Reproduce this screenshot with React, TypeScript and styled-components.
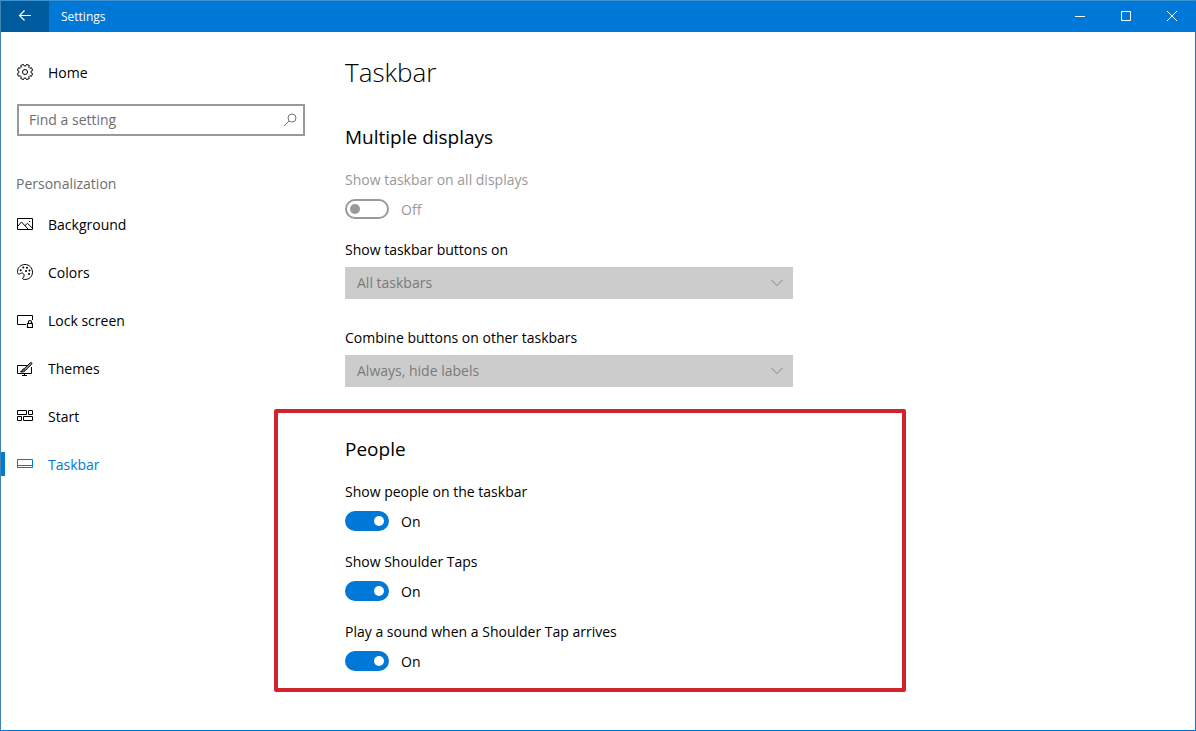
import React, { useState } from "react";
import styled, { createGlobalStyle, css } from "styled-components";

const accent = "#0078d7";

const GlobalStyle = createGlobalStyle`
  *, *::before, *::after { box-sizing: border-box; }
  body {
    margin: 0;
    background: #fff;
    color: #000;
    font: 14px/20px "Segoe UI", "Open Sans", "Noto Sans", sans-serif;
  }
  button, input, select { font: inherit; color: inherit; }
`;

const Window = styled.div`
  display: flex;
  flex-direction: column;
  min-height: 100vh;
  border: 1px solid ${accent};
  border-top-color: #3c93cf;
  border-left-color: #3f86b5;
  background: #fff;
`;

const TitleBar = styled.header`
  display: flex;
  height: 31px;
  background: ${accent};
  color: #fff;
`;

const TitleButton = styled.button<{ $back?: boolean }>`
  display: flex;
  align-items: center;
  justify-content: center;
  width: ${(p) => (p.$back ? 48 : 46)}px;
  padding: 0 0 1px;
  border: 0;
  background: ${(p) => (p.$back ? "#005a9e" : "transparent")};
  color: #fff;
`;

const WindowTitle = styled.span`
  flex: 1;
  padding-left: 12px;
  font-size: 12px;
  line-height: 32px;
`;

const Body = styled.div`
  display: flex;
  flex: 1;
`;

const Sidebar = styled.aside`
  flex: 0 0 304px;
  padding-top: 16px;
`;

const NavLink = styled.a<{ $active?: boolean }>`
  position: relative;
  display: flex;
  align-items: center;
  gap: 15px;
  height: 48px;
  padding-left: 16px;
  color: ${(p) => (p.$active ? accent : "#000")};
  text-decoration: none;
  ${(p) =>
    p.$active &&
    css`
      &::before {
        content: "";
        position: absolute;
        left: 0;
        width: 4px;
        height: 24px;
        background: ${accent};
      }
    `}
`;

const NavText = styled.span`
  padding-top: 2px;
`;

const SearchBox = styled.label`
  display: flex;
  align-items: center;
  height: 32px;
  margin: 8px 0 38px 16px;
  padding: 0 5px 0 10px;
  border: 2px solid #999;
  color: #777;
`;

const SearchInput = styled.input`
  flex: 1;
  min-width: 0;
  padding: 0;
  border: 0;
  outline: 0;
  background: transparent;
  &::placeholder { color: #6e6e6e; opacity: 1; }
`;

const GroupName = styled.div`
  padding: 0 0 6px 15px;
  color: #6e6e6e;
`;

const Main = styled.main`
  flex: 1;
  min-width: 0;
  padding: 24px 40px 38px;
`;

const PageTitle = styled.h1`
  margin: 0 0 35px;
  font-size: 26px;
  line-height: 32px;
  font-weight: 300;
`;

const Section = styled.section<{ $marked?: boolean }>`
  max-width: 448px;
  & + & { margin-top: 48px; }
  ${(p) =>
    p.$marked &&
    css`
      position: relative;
      &::after {
        content: "";
        position: absolute;
        inset: -26px -113px -21px -71px;
        border: 4px solid #d2232a;
        border-radius: 2px;
        pointer-events: none;
      }
    `}
`;

const SectionTitle = styled.h2`
  margin: 0 0 19px;
  font-size: 19px;
  line-height: 28px;
  font-weight: 400;
`;

const ToggleSetting = styled.div<{ $disabled?: boolean }>`
  color: ${(p) => (p.$disabled ? "#999" : "#000")};
  & + & { margin-top: 21px; }
`;

const SelectSetting = styled.div`
  margin-top: 21px;
  & + & { margin-top: 29px; }
`;

const SettingLabel = styled.label`
  display: block;
`;

const ToggleRow = styled.div`
  display: flex;
  align-items: center;
  gap: 12px;
  height: 20px;
  margin-top: 9px;
`;

const ToggleState = styled.span`
  padding-top: 2px;
`;

const ToggleInput = styled.input`
  appearance: none;
  display: flex;
  align-items: center;
  width: 44px;
  height: 20px;
  margin: 0;
  padding: 0 3px;
  border: 2px solid #333;
  border-radius: 10px;
  &::before {
    content: "";
    width: 10px;
    height: 10px;
    border-radius: 5px;
    background: #333;
  }
  &:checked {
    justify-content: flex-end;
    border-color: ${accent};
    background: ${accent};
  }
  &:checked::before { background: #fff; }
  &:disabled { border-color: #999; }
  &:disabled::before { background: #999; }
`;

const SelectFrame = styled.div`
  display: grid;
  align-items: center;
  margin-top: 7px;
  & > * { grid-area: 1 / 1; }
  & > svg { justify-self: end; margin-right: 10px; pointer-events: none; }
`;

const Select = styled.select`
  appearance: none;
  width: 100%;
  height: 32px;
  padding: 0 32px 0 12px;
  border: 0;
  border-radius: 0;
  background: #ccc;
  &:disabled { color: #7a7a7a; opacity: 1; }
`;

type IconProps = { children: React.ReactNode; size?: number };

const Icon = ({ children, size = 16 }: IconProps) => (
  <svg
    width={size}
    height={size}
    viewBox={`0 0 ${size} ${size}`}
    fill="none"
    stroke="currentColor"
    strokeWidth="1"
    aria-hidden="true"
  >
    {children}
  </svg>
);

const gearPath = (() => {
  const points: string[] = [];
  const at = (radius: number, degrees: number) => {
    const a = (degrees * Math.PI) / 180;
    return `${(8 + radius * Math.sin(a)).toFixed(2)} ${(8 - radius * Math.cos(a)).toFixed(2)}`;
  };
  for (let i = 0; i < 8; i++) {
    const c = i * 45 + 22.5;
    points.push(at(6.1, c - 15), at(7.8, c - 11), at(7.8, c + 11), at(6.1, c + 15));
  }
  return `M${points.join("L")}Z`;
})();

const icons = {
  home: (
    <Icon>
      <path d={gearPath} strokeLinejoin="round" />
      <circle cx="8" cy="8" r="2.5" />
    </Icon>
  ),
  background: (
    <Icon>
      <path d="M.5 2.5h15v11H.5z" />
      <path d="M.5 10.5 4.500 6l6.500 7M8 9.700l2.500-2.400 5 5" />
      <path d="M12 5.500h1.200" />
    </Icon>
  ),
  colors: (
    <Icon>
      <path d="M6.2 15.2c1.6.5 4 .3 5.9-.8 2.1-1.2 3.400-3.600 3.400-6.200C15.500 3.800 12.200.5 8 .5S.5 3.600.5 7.500c0 1.500.5 2.700 1.500 2.700 1.300 0 1.700-1.500 3.200-1.200 1.300.3 2.200 1.500 1.900 3-.2 1.200-1.300 1.500-1.500 2.300-.1.400.2.700.6.900Z" />
      <g fill="currentColor" stroke="none">
        <circle cx="3.7" cy="6.2" r="1" />
        <circle cx="6.3" cy="3.6" r="1" />
        <circle cx="10" cy="3.7" r="1" />
        <circle cx="12.5" cy="6.5" r="1" />
        <circle cx="12" cy="10" r="1" />
        <circle cx="9" cy="7" r="1" />
      </g>
    </Icon>
  ),
  lock: (
    <Icon>
      <path d="M9 12.5H.5v-9h15V8" />
      <path d="M10.5 11.5h5v4h-5z" strokeWidth="1.2" />
      <path d="M11.5 11.500v-1.500a1.500 1.500 0 0 1 3 0v1.500" strokeWidth="1.2" />
    </Icon>
  ),
  themes: (
    <Icon>
      <path d="M10 5.5H.5v8h14V7M5 15.5h5M7.500 13.500v2" />
      <path
        d="M3.500 11.700c1.500 0 1.500-2.900 3.400-2.900 1 0 1.600.8 1.400 1.700-.3 1.200-2.600 1.900-4.800 1.200Z"
        fill="#777"
      />
      <path d="m7.300 8.500 6-5.700c.5-.4 1.100-.4 1.400 0 .4.400.3.900-.1 1.400L8.800 10" fill="#999" />
    </Icon>
  ),
  start: (
    <Icon>
      <path d="M.5 2.5h9v4h-9zM11.5 2.5h4v4h-4zM.5 8.5h4v4h-4zM6.5 8.5h9v4h-9z" />
    </Icon>
  ),
  taskbar: (
    <Icon>
      <path d="M.5 3.5h15v8H.5zM.5 9.5h15" />
    </Icon>
  ),
};

const Chevron = () => (
  <svg width="12" height="8" viewBox="0 0 12 8" fill="none" stroke="#858585" aria-hidden="true">
    <path d="m.5 1 5.500 5.500L11.500 1" />
  </svg>
);

const navItems: { name: string; icon: keyof typeof icons }[] = [
  { name: "Background", icon: "background" },
  { name: "Colors", icon: "colors" },
  { name: "Lock screen", icon: "lock" },
  { name: "Themes", icon: "themes" },
  { name: "Start", icon: "start" },
  { name: "Taskbar", icon: "taskbar" },
];

type ToggleProps = { id: string; label: string; initial?: boolean; disabled?: boolean };

const Toggle = ({ id, label, initial = false, disabled }: ToggleProps) => {
  const [on, setOn] = useState(initial);
  return (
    <ToggleSetting $disabled={disabled}>
      <SettingLabel htmlFor={id}>{label}</SettingLabel>
      <ToggleRow>
        <ToggleInput
          id={id}
          type="checkbox"
          role="switch"
          checked={on}
          disabled={disabled}
          onChange={(e) => setOn(e.target.checked)}
        />
        <ToggleState>{on ? "On" : "Off"}</ToggleState>
      </ToggleRow>
    </ToggleSetting>
  );
};

const Choice = ({ id, label, value }: { id: string; label: string; value: string }) => (
  <SelectSetting>
    <SettingLabel htmlFor={id}>{label}</SettingLabel>
    <SelectFrame>
      <Select id={id} disabled defaultValue={value}>
        <option>{value}</option>
      </Select>
      <Chevron />
    </SelectFrame>
  </SelectSetting>
);

export default function App() {
  return (
    <>
      <GlobalStyle />
      <Window>
        <TitleBar>
          <TitleButton $back aria-label="Back">
            <Icon>
              <path d="M14 7.5H2.500M7.500 2.500l-5 5 5 5" strokeWidth="1.2" />
            </Icon>
          </TitleButton>
          <WindowTitle>Settings</WindowTitle>
          <TitleButton aria-label="Minimize">
            <Icon size={10}>
              <path d="M0 5.5h10" />
            </Icon>
          </TitleButton>
          <TitleButton aria-label="Maximize">
            <Icon size={10}>
              <path d="M.5.5h9v9h-9z" />
            </Icon>
          </TitleButton>
          <TitleButton aria-label="Close">
            <Icon size={10}>
              <path d="m0 0 10 10M10 0 0 10" />
            </Icon>
          </TitleButton>
        </TitleBar>
        <Body>
          <Sidebar>
            <NavLink href="#home">
              {icons.home}
              <NavText>Home</NavText>
            </NavLink>
            <SearchBox>
              <SearchInput type="text" placeholder="Find a setting" aria-label="Find a setting" />
              <Icon>
                <circle cx="10" cy="6" r="4" />
                <path d="M7 9l-5 5" />
              </Icon>
            </SearchBox>
            <GroupName>Personalization</GroupName>
            <nav>
              {navItems.map((item) => (
                <NavLink key={item.name} href={`#${item.icon}`} $active={item.name === "Taskbar"}>
                  {icons[item.icon]}
                  <NavText>{item.name}</NavText>
                </NavLink>
              ))}
            </nav>
          </Sidebar>
          <Main>
            <PageTitle>Taskbar</PageTitle>
            <Section>
              <SectionTitle>Multiple displays</SectionTitle>
              <Toggle id="all-displays" label="Show taskbar on all displays" disabled />
              <Choice id="buttons-on" label="Show taskbar buttons on" value="All taskbars" />
              <Choice id="combine" label="Combine buttons on other taskbars" value="Always, hide labels" />
            </Section>
            <Section $marked>
              <SectionTitle>People</SectionTitle>
              <Toggle id="people" label="Show people on the taskbar" initial />
              <Toggle id="taps" label="Show Shoulder Taps" initial />
              <Toggle id="sound" label="Play a sound when a Shoulder Tap arrives" initial />
            </Section>
          </Main>
        </Body>
      </Window>
    </>
  );
}
